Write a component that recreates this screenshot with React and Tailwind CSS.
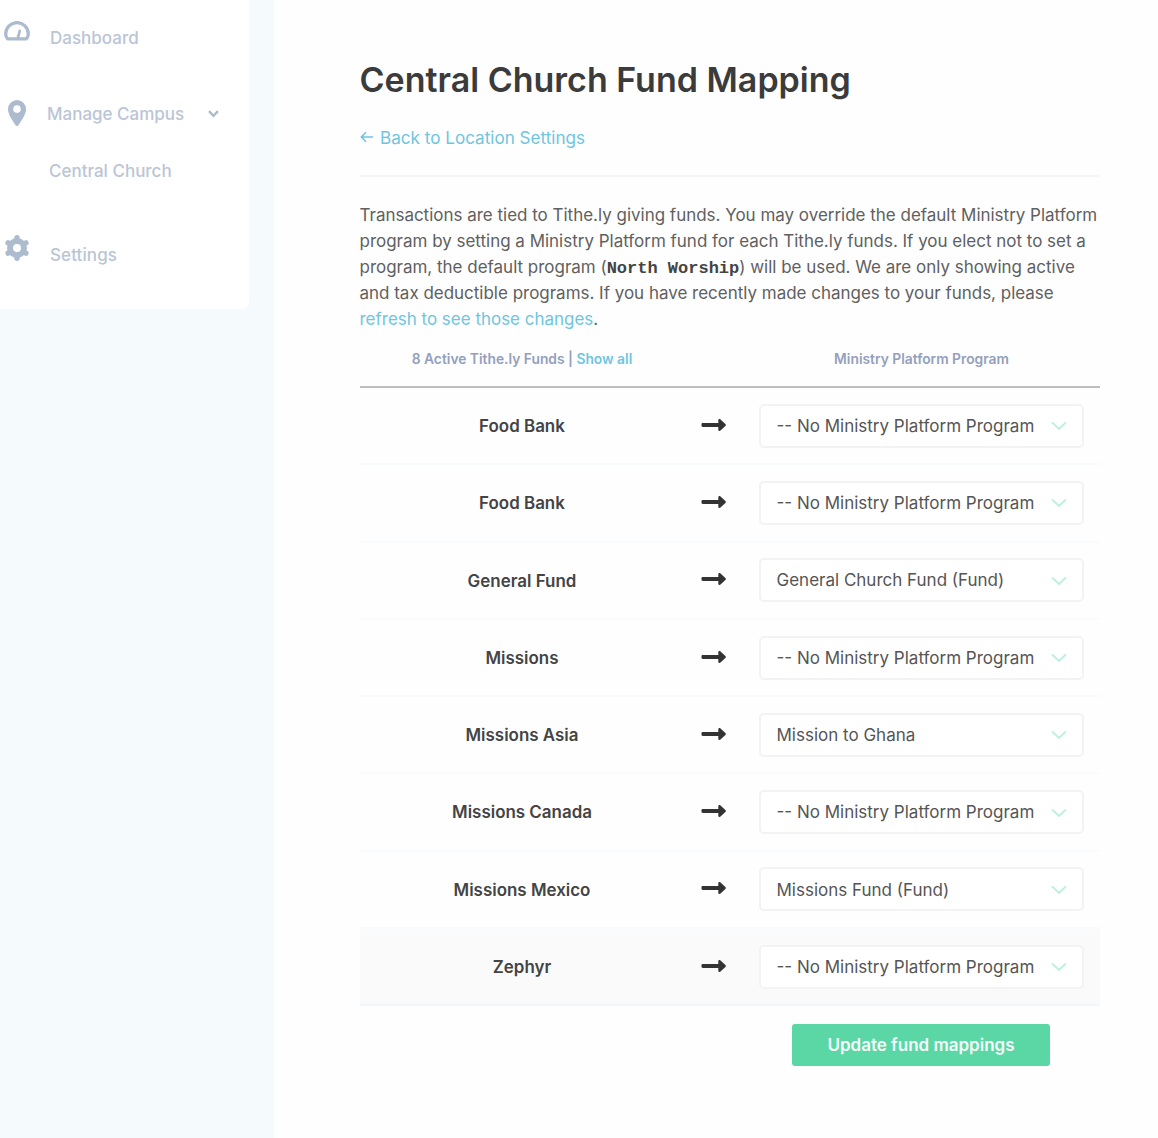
import React from "react";

const funds = [
  { name: "Food Bank", program: "-- No Ministry Platform Program" },
  { name: "Food Bank", program: "-- No Ministry Platform Program" },
  { name: "General Fund", program: "General Church Fund (Fund)" },
  { name: "Missions", program: "-- No Ministry Platform Program" },
  { name: "Missions Asia", program: "Mission to Ghana" },
  { name: "Missions Canada", program: "-- No Ministry Platform Program" },
  { name: "Missions Mexico", program: "Missions Fund (Fund)" },
  { name: "Zephyr", program: "-- No Ministry Platform Program", active: true },
];

const GaugeIcon = () => (
  <svg width="26" height="20" viewBox="0 0 26 20" fill="none" stroke="#adbbce" strokeLinecap="round" strokeLinejoin="round">
    <path d="M3.6 17.9C2.3 16.6 1.7 14.6 1.7 12.9a11.3 11.3 0 0 1 22.6 0c0 1.7-.6 3.7-1.9 5Z" strokeWidth="3.3" />
    <path d="M14 16.5 15.700 10" strokeWidth="2.8" />
  </svg>
);

const PinIcon = () => (
  <svg width="18" height="26" viewBox="0 0 18 26" fill="#adbbce">
    <path
      fillRule="evenodd"
      d="M9 0a9 9 0 0 1 9 9c0 4.500-2.500 8.500-7.500 16.200a1.800 1.800 0 0 1-3 0C2.500 17.500 0 13.500 0 9a9 9 0 0 1 9-9Zm0 5.300a3.800 3.800 0 1 0 0 7.600 3.800 3.800 0 0 0 0-7.600Z"
    />
  </svg>
);

const GearIcon = () => (
  <svg width="26" height="26" viewBox="-13 -13 26 26" fill="none" stroke="#adbbce">
    <circle r="7" strokeWidth="6" />
    <path
      d="M0-8V-10.200M0 8V10.200M6.900-4 8.900-5.100M6.900 4 8.900 5.100M-6.900-4-8.900-5.100M-6.900 4-8.900 5.100"
      strokeWidth="5.400"
      strokeLinecap="round"
    />
  </svg>
);

const ArrowIcon = () => (
  <svg width="26" height="14" viewBox="0 0 26 14" fill="#333333">
    <path d="M1.800 5h15.500V2.300c0-1.200 1.400-1.700 2.200-.9l4.900 4.600c.6.600.6 1.400 0 2l-4.900 4.600c-.8.800-2.200.3-2.200-.9V9H1.800C1 9 .5 8.500.5 7.800V6.200C.5 5.500 1 5 1.800 5Z" />
  </svg>
);

const Chevron = () => (
  <svg className="mt-px" width="16" height="10" viewBox="0 0 16 10" fill="none" stroke="#b9f0dc" strokeWidth="1.800">
    <path d="M1 1.300 8 8l7-6.700" />
  </svg>
);

const Sidebar = () => (
  <aside className="w-[274px] shrink-0 bg-[#f5fafd]">
    <nav className="h-[309px] w-[249px] rounded-br-lg bg-white pt-[21px] text-[17px] leading-6 font-medium text-[#bac5d6]">
      <a className="flex h-8 pl-1">
        <GaugeIcon />
        <span className="mt-[5px] ml-5">Dashboard</span>
      </a>
      <a className="mt-[47px] flex h-[27px] pl-2">
        <PinIcon />
        <span className="mt-[2px] ml-[21px]">Manage Campus</span>
        <svg className="mt-[10px] ml-[24px]" width="11" height="8" viewBox="0 0 11 8" fill="none" stroke="#adbbce" strokeWidth="2.400">
          <path d="M1 1.200 5.500 5.800 10 1.200" />
        </svg>
      </a>
      <a className="mt-[32px] block pl-[49px]">Central Church</a>
      <a className="mt-[52px] flex pl-1">
        <GearIcon />
        <span className="mt-[8px] ml-5 tracking-[0.1px]">Settings</span>
      </a>
    </nav>
  </aside>
);

const FundRow = ({ fund }) => (
  <div
    className={`flex h-[77.300px] items-center border-b-2 ${
      fund.active ? "border-[#f2f6f9] bg-[#fafafa]" : "border-[#fafbfc]"
    }`}
  >
    <div className="w-[325px] pt-[2px] text-center text-[16.950px] font-semibold text-[#444444]">{fund.name}</div>
    <div className="ml-[16px] w-[58px] pb-[2px]">
      <ArrowIcon />
    </div>
    <button className="flex h-[44px] w-[325px] items-center justify-between rounded-[5px] border-2 border-[#f3f3f3] bg-white pr-[15px] pl-4 text-[17px] text-[#555555]">
      <span className="pt-[2px] whitespace-nowrap">{fund.program}</span>
      <Chevron />
    </button>
  </div>
);

const App = () => {
  return (
    <div className="flex h-[1138px] w-[1158px] overflow-hidden bg-[#fefefe] font-[Inter,sans-serif]">
      <Sidebar />

      <main className="ml-[85.500px] w-[740px] pt-[58px]">
        <h1 className="text-[34px] leading-[44px] font-semibold whitespace-nowrap text-[#3b3b3b]">
          Central Church Fund Mapping
        </h1>
        <a className="mt-[23px] flex h-6 items-center text-[17.100px] text-[#6fc5e0]">
          <svg className="mr-[7.500px]" width="13" height="12" viewBox="0 0 13 12" fill="none" stroke="#6fc5e0" strokeWidth="1.500">
            <path d="M13 6H1.500M6 1.200 1.300 6 6 10.800" />
          </svg>
          <span className="pt-px">Back to Location Settings</span>
        </a>

        <hr className="mt-[26px] border-t-2 border-[#f5f5f5]" />

        {/* intro text */}
        <p className="mt-[25px] text-[16.980px] leading-[26px] whitespace-nowrap text-[#606060]">
          Transactions are tied to Tithe.ly giving funds. You may override the default Ministry Platform
          <br />
          program by setting a Ministry Platform fund for each Tithe.ly funds. If you elect not to set a
          <br />
          program, the default program (
          <strong className="font-['Liberation_Mono',monospace] text-[17px] leading-none text-[#444444]">North Worship</strong>
          ) will be used. We are only showing active
          <br />
          and tax deductible programs. If you have recently made changes to your funds, please
          <br />
          <a className="text-[#6fc5e0]">refresh to see those changes</a>.
        </p>

        {/* fund table */}
        <div className="mt-[13px] flex h-[43px] border-b-2 border-[#bdbdc2] pt-[2px] text-[13.800px] leading-6 font-semibold text-[#93a0bd]">
          <div className="w-[325px] text-center whitespace-nowrap">
            8 Active Tithe.ly Funds | <a className="text-[#6fc5e0]">Show all</a>
          </div>
          <div className="ml-[75px] w-[324px] text-center">Ministry Platform Program</div>
        </div>
        {funds.map((fund, i) => (
          <FundRow key={i} fund={fund} />
        ))}

        <div className="mt-[18px] ml-[399.500px] flex w-[324px] justify-center">
          <button className="h-[42px] w-[258px] rounded-[3px] bg-[#5bd7a5] text-[17px] font-semibold text-[#f4fdf9]">
            Update fund mappings
          </button>
        </div>
      </main>
    </div>
  );
};

export default App;
